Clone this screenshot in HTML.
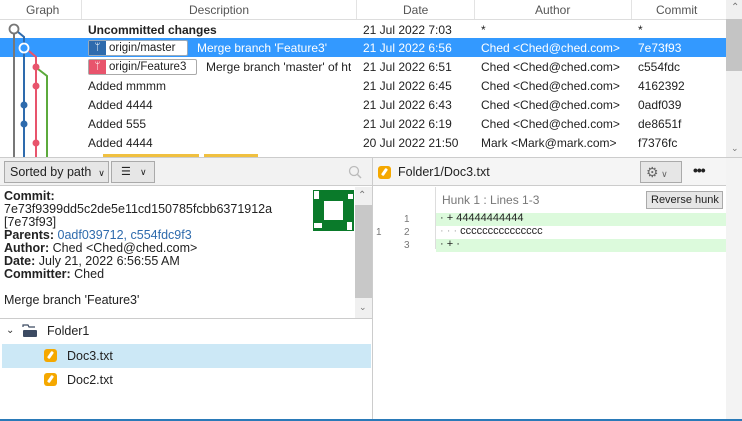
<!DOCTYPE html><html><head><style>
*{box-sizing:border-box;margin:0;padding:0}
body{width:742px;height:421px;overflow:hidden;background:#fff;font-family:"Liberation Sans",sans-serif;font-size:12px;color:#222;position:relative}
.a{position:absolute;white-space:nowrap}
.hdr{color:#555;font-size:12px}
.row{position:absolute;left:0;width:726px;height:19px}
.c{position:absolute;top:3px;white-space:nowrap}
.tag{position:absolute;top:2px;height:16px;border:1px solid #aaa;background:#fff;border-radius:2px;font-size:11.5px;padding-left:20px;line-height:14px;color:#222}
.tag i{position:absolute;left:0;top:0;width:17px;height:14px;color:#fff;font-style:normal;font-size:10px;text-align:center;line-height:14px}
.ic{position:absolute;width:13px;height:13px;background:#f5a800;border-radius:3px}
.ic:after{content:"";position:absolute;left:5px;top:2px;width:3px;height:8px;background:#fff;transform:rotate(35deg);border-radius:1px}
</style></head><body>
<div class="a" style="left:0;top:0;width:726px;height:20px;border-bottom:1px solid #ddd"></div>
<div class="a hdr" style="left:26px;top:3px">Graph</div>
<div class="a" style="left:81px;top:0;width:1px;height:19px;background:#e3e3e3"></div>
<div class="a hdr" style="left:189px;top:3px">Description</div>
<div class="a" style="left:356px;top:0;width:1px;height:19px;background:#e3e3e3"></div>
<div class="a hdr" style="left:403px;top:3px">Date</div>
<div class="a" style="left:474px;top:0;width:1px;height:19px;background:#e3e3e3"></div>
<div class="a hdr" style="left:535px;top:3px">Author</div>
<div class="a" style="left:631px;top:0;width:1px;height:19px;background:#e3e3e3"></div>
<div class="a hdr" style="left:656px;top:3px">Commit</div>
<div class="a" style="left:726px;top:0;width:16px;height:157px;background:#f0f0f0"></div>
<div class="a" style="left:726px;top:19px;width:16px;height:52px;background:#c4c4c4"></div>
<div class="a" style="left:731px;top:2px;font-size:10px;color:#777">⌃</div>
<div class="a" style="left:731px;top:143px;font-size:9px;color:#777">⌄</div>
<div class="a" style="left:0;top:38px;width:726px;height:19px;background:#3399ff"></div>
<div class="row" style="top:20px"><div class="c" style="left:88px;font-weight:bold">Uncommitted changes</div><div class="c" style="left:363px">21 Jul 2022 7:03</div><div class="c" style="left:481px">*</div><div class="c" style="left:638px">*</div></div>
<div class="row" style="top:38px;color:#fff"><div class="tag" style="left:88px;width:100px;border-color:#9ab"><i style="background:#2e6bad">ᛘ</i>origin/master</div><div class="c" style="left:197px">Merge branch 'Feature3'</div><div class="c" style="left:363px">21 Jul 2022 6:56</div><div class="c" style="left:481px">Ched &lt;Ched@ched.com&gt;</div><div class="c" style="left:638px">7e73f93</div></div>
<div class="row" style="top:57px"><div class="tag" style="left:88px;width:109px"><i style="background:#e8546c">ᛘ</i>origin/Feature3</div><div class="c" style="left:206px;width:145px;overflow:hidden">Merge branch 'master' of ht</div><div class="c" style="left:363px">21 Jul 2022 6:51</div><div class="c" style="left:481px">Ched &lt;Ched@ched.com&gt;</div><div class="c" style="left:638px">c554fdc</div></div>
<div class="row" style="top:76px"><div class="c" style="left:88px">Added mmmm</div><div class="c" style="left:363px">21 Jul 2022 6:45</div><div class="c" style="left:481px">Ched &lt;Ched@ched.com&gt;</div><div class="c" style="left:638px">4162392</div></div>
<div class="row" style="top:95px"><div class="c" style="left:88px">Added 4444</div><div class="c" style="left:363px">21 Jul 2022 6:43</div><div class="c" style="left:481px">Ched &lt;Ched@ched.com&gt;</div><div class="c" style="left:638px">0adf039</div></div>
<div class="row" style="top:114px"><div class="c" style="left:88px">Added 555</div><div class="c" style="left:363px">21 Jul 2022 6:19</div><div class="c" style="left:481px">Ched &lt;Ched@ched.com&gt;</div><div class="c" style="left:638px">de8651f</div></div>
<div class="row" style="top:133px"><div class="c" style="left:88px">Added 4444</div><div class="c" style="left:363px">20 Jul 2022 21:50</div><div class="c" style="left:481px">Mark &lt;Mark@mark.com&gt;</div><div class="c" style="left:638px">f7376fc</div></div>
<div class="a" style="left:103px;top:154px;width:96px;height:4px;background:#f0c040"></div>
<div class="a" style="left:204px;top:154px;width:54px;height:4px;background:#f0c040"></div>
<svg class="a" style="left:0;top:20px" width="82" height="140">
<path d="M14 10V140" stroke="#777" stroke-width="2" fill="none"/>
<path d="M18 12L24 17V140" stroke="#2e6bad" stroke-width="2" fill="none"/>
<path d="M29 31L36 37V140" stroke="#e8546c" stroke-width="2" fill="none"/>
<path d="M38 49L47 56V140" stroke="#5caa3c" stroke-width="2" fill="none"/>
<circle cx="14" cy="9" r="4.5" fill="#fff" stroke="#777" stroke-width="1.8"/>
<circle cx="24" cy="28" r="4.5" fill="#3399ff" stroke="#fff" stroke-width="1.8"/>
<circle cx="36" cy="47" r="3.5" fill="#e8546c"/>
<circle cx="36" cy="66" r="3.5" fill="#e8546c"/>
<circle cx="24" cy="85" r="3.5" fill="#2e6bad"/>
<circle cx="24" cy="104" r="3.5" fill="#2e6bad"/>
<circle cx="36" cy="123" r="3.5" fill="#e8546c"/>
</svg>
<div class="a" style="left:0;top:157px;width:742px;height:1px;background:#ccc"></div>
<div class="a" style="left:0;top:158px;width:372px;height:28px;background:#f2f2f2;border-bottom:1px solid #ccc"></div>
<div class="a" style="left:4px;top:161px;width:105px;height:22px;border:1px solid #aaa;background:#e6e6e6;padding:3px 0 0 5px;font-size:12.5px">Sorted by path&nbsp; <span style="font-size:9px">∨</span></div>
<div class="a" style="left:111px;top:161px;width:44px;height:22px;border:1px solid #aaa;background:#e6e6e6;padding:3px 0 0 9px;font-size:11px">☰&nbsp;&nbsp; <span style="font-size:9px">∨</span></div>
<svg class="a" style="left:348px;top:165px" width="14" height="14"><circle cx="6" cy="6" r="4.5" fill="none" stroke="#bbb" stroke-width="1.3"/><path d="M9.5 9.5L13 13" stroke="#bbb" stroke-width="1.5"/></svg>
<div class="a" style="left:4px;top:190px;font-size:12.5px;line-height:13px">
<b>Commit:</b><br>7e73f9399dd5c2de5e11cd150785fcbb6371912a<br>[7e73f93]<br><b>Parents:</b> <span style="color:#2e6bad">0adf039712, c554fdc9f3</span><br><b>Author:</b> Ched &lt;Ched@ched.com&gt;<br><b>Date:</b> July 21, 2022 6:56:55 AM<br><b>Committer:</b> Ched<br><br>Merge branch 'Feature3'</div>
<svg class="a" style="left:313px;top:190px" width="41" height="41"><rect width="41" height="41" fill="#0a7a2a"/><rect x="11" y="11" width="19" height="19" fill="#fff"/><rect x="1" y="1" width="5" height="8" fill="#fff"/><rect x="35" y="4" width="5" height="5" fill="#fff"/><rect x="1" y="33" width="8" height="5" fill="#fff"/><rect x="34" y="32" width="5" height="8" fill="#fff"/></svg>
<div class="a" style="left:355px;top:187px;width:17px;height:131px;background:#f0f0f0"></div>
<div class="a" style="left:355px;top:205px;width:17px;height:93px;background:#c8c8c8"></div>
<div class="a" style="left:358px;top:190px;font-size:10px;color:#777">⌃</div>
<div class="a" style="left:359px;top:302px;font-size:9px;color:#777">⌄</div>
<div class="a" style="left:0;top:318px;width:372px;height:1px;background:#ccc"></div>
<div class="a" style="left:6px;top:325px;font-size:10px;color:#333">⌄</div>
<svg class="a" style="left:22px;top:323px" width="16" height="15"><path d="M1 4V2h5l1 2h6" fill="none" stroke="#3c4a62" stroke-width="1.2"/><rect x="1" y="7" width="14" height="7" rx="1" fill="#3c4a62"/></svg>
<div class="a" style="left:47px;top:324px;font-size:12.5px">Folder1</div>
<div class="a" style="left:2px;top:344px;width:369px;height:24px;background:#cce8f6"></div>
<div class="ic" style="left:44px;top:349px"></div><div class="a" style="left:67px;top:349px;font-size:12.5px">Doc3.txt</div>
<div class="ic" style="left:44px;top:373px"></div><div class="a" style="left:67px;top:373px;font-size:12.5px">Doc2.txt</div>
<div class="a" style="left:372px;top:158px;width:1px;height:262px;background:#ccc"></div>
<div class="a" style="left:373px;top:158px;width:353px;height:28px;background:#f5f5f5;border-bottom:1px solid #ccc"></div>
<div class="ic" style="left:378px;top:166px"></div>
<div class="a" style="left:398px;top:165px;font-size:12.5px">Folder1/Doc3.txt</div>
<div class="a" style="left:640px;top:161px;width:42px;height:22px;border:1px solid #aaa;background:#e6e6e6;padding:2px 0 0 5px;font-size:14px;color:#666">⚙<span style="font-size:9px"> ∨</span></div>
<div class="a" style="left:693px;top:162px;font-size:14px;font-weight:bold;letter-spacing:-1px">•••</div>
<div class="a" style="left:435px;top:187px;width:1px;height:62px;background:#ddd"></div>
<div class="a" style="left:442px;top:193px;color:#777">Hunk 1 : Lines 1-3</div>
<div class="a" style="left:646px;top:191px;width:77px;height:18px;border:1px solid #aaa;background:#e6e6e6;font-size:11px;padding:2px 0 0 4px">Reverse hunk</div>
<div class="a" style="left:436px;top:213px;width:290px;height:13px;background:#dcfadc"></div>
<div class="a" style="left:436px;top:239px;width:290px;height:13px;background:#dcfadc"></div>
<div class="a" style="left:404px;top:213px;font-size:10px;color:#777;line-height:13px">1<br>2<br>3</div>
<div class="a" style="left:376px;top:226px;font-size:10px;color:#777;line-height:13px">1</div>
<div class="a" style="left:440px;top:212px;font-size:11px;line-height:13px">· + 44444444444<br><span style="color:#aaa">· · ·</span> ccccccccccccccc<br>· + ·</div>
<div class="a" style="left:726px;top:158px;width:16px;height:262px;background:#f3f3f3"></div>
<div class="a" style="left:0;top:419px;width:742px;height:2px;background:#2a7ab8"></div>
</body></html>
